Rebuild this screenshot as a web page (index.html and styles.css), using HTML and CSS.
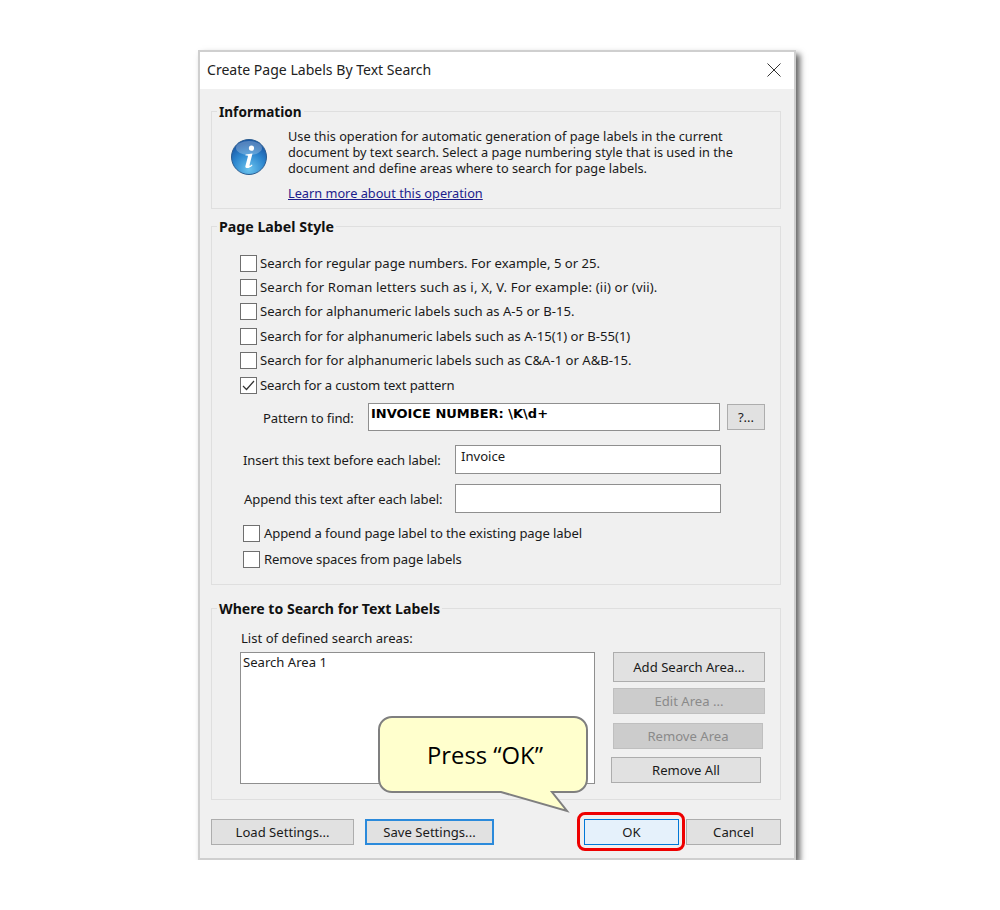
FILE: index.html
```html
<!DOCTYPE html>
<html lang="en">
<head>
  <meta charset="UTF-8" />
  <title>Create Page Labels By Text Search</title>
  <link rel="stylesheet" href="styles.css">
</head>
<body>

  <div class="dialog">
    <div class="titlebar">
      <span>Create Page Labels By Text Search</span>
      <svg class="close-icon" width="14" height="14" viewBox="0 0 14 14"><path d="M.5.5l13 13M13.5.5l-13 13" stroke="#333" fill="none"/></svg>
    </div>

    <div class="dialog-body">
      <fieldset class="group group-info">
        <legend>Information</legend>
        <div class="info-row">
          <svg class="info-icon" width="38" height="38" viewBox="0 0 38 38">
            <defs>
              <radialGradient id="blueball" cx="50%" cy="85%" r="75%">
                <stop offset="0" stop-color="#6cc4ee"/>
                <stop offset="0.6" stop-color="#2d87cf"/>
                <stop offset="1" stop-color="#1a5aa8"/>
              </radialGradient>
            </defs>
            <circle cx="19" cy="19" r="17.500" fill="url(#blueball)" stroke="#2b5c8f"/>
            <ellipse cx="19" cy="10" rx="13" ry="7" fill="#fff" opacity=".25"/>
            <path d="M21.500 7.500a2.600 2.600 0 1 1-.1 5.200a2.600 2.600 0 0 1 .1-5.200zM15.500 16.500l7-1l-3 11.500c-.2 1 .6 1 2.400-.6l.6.8c-2.500 3-7 4-7.200 1.200l2.600-9.900c.2-1-.6-1.200-2.400-1z" fill="#fff"/>
          </svg>
          <div class="info-text">
            <p>Use this operation for automatic generation of page labels in the current document by text search. Select a page numbering style that is used in the document and define areas where to search for page labels.</p>
            <a href="#">Learn more about this operation</a>
          </div>
        </div>
      </fieldset>

      <fieldset class="group group-style">
        <legend>Page Label Style</legend>
        <div class="check-list">
          <div class="check-row"><span class="checkbox"></span>Search for regular page numbers. For example, 5 or 25.</div>
          <div class="check-row text-wide"><span class="checkbox"></span>Search for Roman letters such as i, X, V. For example: (ii) or (vii).</div>
          <div class="check-row"><span class="checkbox"></span>Search for alphanumeric labels such as A-5 or B-15.</div>
          <div class="check-row row-step"><span class="checkbox"></span>Search for for alphanumeric labels such as A-15(1) or B-55(1)</div>
          <div class="check-row"><span class="checkbox"></span>Search for for alphanumeric labels such as C&amp;A-1 or A&amp;B-15.</div>
          <div class="check-row row-step text-tight">
            <span class="checkbox"><svg width="15" height="15" viewBox="0 0 15 15"><path d="M2 8l3.500 3.500L13 3" stroke="#333" stroke-width="1.200" fill="none"/></svg></span>Search for a custom text pattern
          </div>
        </div>

        <div class="pattern-row">
          <label class="text-tight">Pattern to find:</label>
          <div class="textbox pattern-box">INVOICE NUMBER: \K\d+</div>
          <div class="btn btn-help">?...</div>
        </div>
        <div class="field-row field-insert">
          <label class="text-tight">Insert this text before each label:</label>
          <div class="textbox">Invoice</div>
        </div>
        <div class="field-row field-append">
          <label class="text-tight">Append this text after each label:</label>
          <div class="textbox"></div>
        </div>

        <div class="check-row check-lower text-tight"><span class="checkbox"></span>Append a found page label to the existing page label</div>
        <div class="check-row check-lower check-last text-tight"><span class="checkbox"></span>Remove spaces from page labels</div>
      </fieldset>

      <fieldset class="group group-where">
        <legend>Where to Search for Text Labels</legend>
        <div class="list-label">List of defined search areas:</div>
        <div class="where-row">
          <div class="listbox">Search Area 1</div>
          <div class="area-buttons">
            <div class="btn btn-add">Add Search Area...</div>
            <div class="btn btn-disabled btn-edit">Edit Area ...</div>
            <div class="btn btn-disabled btn-remove">Remove Area</div>
            <div class="btn btn-remove-all">Remove All</div>
          </div>
        </div>
      </fieldset>

      <div class="footer-row">
        <div class="btn btn-load">Load Settings...</div>
        <div class="btn btn-save">Save Settings...</div>
        <div class="btn btn-ok">OK</div>
        <div class="btn btn-cancel">Cancel</div>
      </div>
    </div>

    <!-- annotation drawn over the dialog -->
    <div class="callout">
      <svg width="214" height="98" viewBox="0 0 214 98">
        <path d="M15 1H197a13 13 0 0 1 13 13V63a13 13 0 0 1-13 13H175L190 95L124 76H15A13 13 0 0 1 2 63V14A13 13 0 0 1 15 1z" fill="#ffffcd" stroke="#7f7f7f" stroke-width="2"/>
      </svg>
      <span class="callout-text">Press “OK”</span>
    </div>
    <div class="ok-highlight"></div>
  </div>

</body>
</html>
```

FILE: styles.css
```css
body {
  margin: 0;
  background-color: #fff;
  font-family: "Noto Sans", Arial, sans-serif;
  font-size: 13.1px;
  line-height: 16px;
  color: #1a1a1a;
}
.text-tight {
  letter-spacing: -0.12px;
}
.text-wide {
  letter-spacing: 0.16px;
}
.dialog {
  position: relative;
  box-sizing: border-box;
  width: 598px;
  height: 810px;
  margin: 50px 0 0 198px;
  border: 2px solid #cfcfcf;
  background-color: #f0f0f0;
  box-shadow: 4px 4px 6px #666;
}
.titlebar {
  box-sizing: border-box;
  display: flex;
  justify-content: space-between;
  align-items: center;
  height: 37px;
  padding: 0 13px 1px 7px;
  background-color: #fff;
  font-size: 14.06px;
  color: #222;
}
.dialog-body {
  padding: 0 13px 0 11px;
}

/* group boxes */
.group {
  box-sizing: border-box;
  margin: 0;
  padding: 0;
  border: 1px solid #dfdfdf;
  min-width: 0;
}
.group legend {
  margin-left: 5px;
  padding: 2px 2px 0;
  font-weight: bold;
  font-size: 14.2px;
  line-height: 16px;
  color: #111;
}
.group-info legend {
  font-size: 13.6px;
}
.group-where legend {
  font-size: 14.1px;
}
.group-info {
  height: 107px;
  margin-top: 13px;
}
.group-style {
  height: 368px;
  margin-top: 8px;
}
.group-where {
  height: 201px;
  margin-top: 14px;
}

/* information */
.info-row {
  display: flex;
}
.info-icon {
  margin: 18px 20px 0 18px;
}
.info-text {
  width: 470px;
  margin-top: 8px;
  font-size: 12.75px;
}
.info-text p {
  margin: 0 0 9px;
}
.info-text a {
  color: #1c1c8c;
}

/* checkboxes */
.check-list {
  display: flex;
  flex-direction: column;
  gap: 6px;
  margin: 19px 0 0 28px;
}
.row-step {
  margin-top: 1px;
}
.check-row {
  display: flex;
  align-items: center;
  height: 18px;
}
.checkbox {
  box-sizing: border-box;
  width: 17px;
  height: 17px;
  margin-right: 3px;
  border: 1px solid #6f6f6f;
  background-color: #fff;
  flex: none;
}
.checkbox svg {
  display: block;
}
.check-lower {
  margin: 11px 0 0 31px;
}
.check-lower .checkbox {
  margin-right: 4px;
}
.check-last {
  margin-top: 8px;
}

/* text fields */
.textbox {
  box-sizing: border-box;
  padding: 2px 5px;
  border: 1px solid #8f8f8f;
  background-color: #fff;
}
.pattern-row {
  display: flex;
  align-items: flex-start;
  margin: 9px 0 0 51px;
}
.pattern-row label {
  width: 105px;
  padding-top: 7px;
}
.pattern-box {
  width: 352px;
  height: 28px;
  padding: 2px 2px;
  font-family: "DejaVu Sans", sans-serif;
  font-weight: bold;
  font-size: 13px;
  color: #000;
}
.btn-help {
  width: 38px;
  height: 26px;
  margin: 1px 0 0 7px;
}
.field-row {
  display: flex;
  align-items: center;
  margin-left: 31px;
}
.field-row label {
  width: 212px;
}
.field-row .textbox {
  width: 266px;
  height: 29px;
}
.field-insert {
  margin-top: 14px;
}
.field-append {
  margin-top: 10px;
  margin-left: 32px;
}
.field-append label {
  width: 211px;
}

/* where to search */
.list-label {
  margin: 13px 0 0 29px;
}
.where-row {
  display: flex;
  margin: 6px 0 0 28px;
}
.listbox {
  box-sizing: border-box;
  width: 355px;
  height: 132px;
  padding: 1px 2px;
  border: 1px solid #8f8f8f;
  background-color: #fff;
}
.area-buttons {
  display: flex;
  flex-direction: column;
  margin-left: 18px;
}

/* buttons */
.btn {
  box-sizing: border-box;
  display: flex;
  align-items: center;
  justify-content: center;
  border: 1px solid #adadad;
  background-color: #e1e1e1;
}
.btn-add {
  width: 152px;
  height: 30px;
}
.btn-edit {
  width: 152px;
  height: 26px;
  margin-top: 6px;
}
.btn-remove {
  width: 150px;
  height: 26px;
  margin-top: 9px;
}
.btn-remove-all {
  width: 150px;
  height: 26px;
  margin: 8px 0 0 -2px;
}
.btn-disabled {
  background-color: #cccccc;
  border-color: #bfbfbf;
  color: #8a8a8a;
}
.footer-row {
  display: flex;
  align-items: center;
  margin-top: 19px;
}
.btn-load {
  width: 143px;
  height: 26px;
}
.btn-save {
  width: 129px;
  height: 26px;
  margin-left: 11px;
  border: 2px solid #2b8adb;
}
.btn-ok {
  width: 95px;
  height: 26px;
  margin-left: 90px;
  border-color: #0078d7;
  background-color: #e5f1fb;
}
.btn-cancel {
  width: 95px;
  height: 26px;
  margin-left: 7px;
}

/* annotation */
.callout {
  position: absolute;
  left: 177px;
  top: 664px;
  width: 214px;
  height: 98px;
}
.callout svg {
  display: block;
}
.callout-text {
  position: absolute;
  left: 50px;
  top: 24px;
  font-family: "Open Sans", sans-serif;
  font-size: 23.8px;
  line-height: 30px;
  color: #000;
}
.ok-highlight {
  position: absolute;
  left: 377px;
  top: 760px;
  box-sizing: border-box;
  width: 108px;
  height: 39px;
  border: 3px solid #ee0000;
  border-radius: 8px;
}
```
